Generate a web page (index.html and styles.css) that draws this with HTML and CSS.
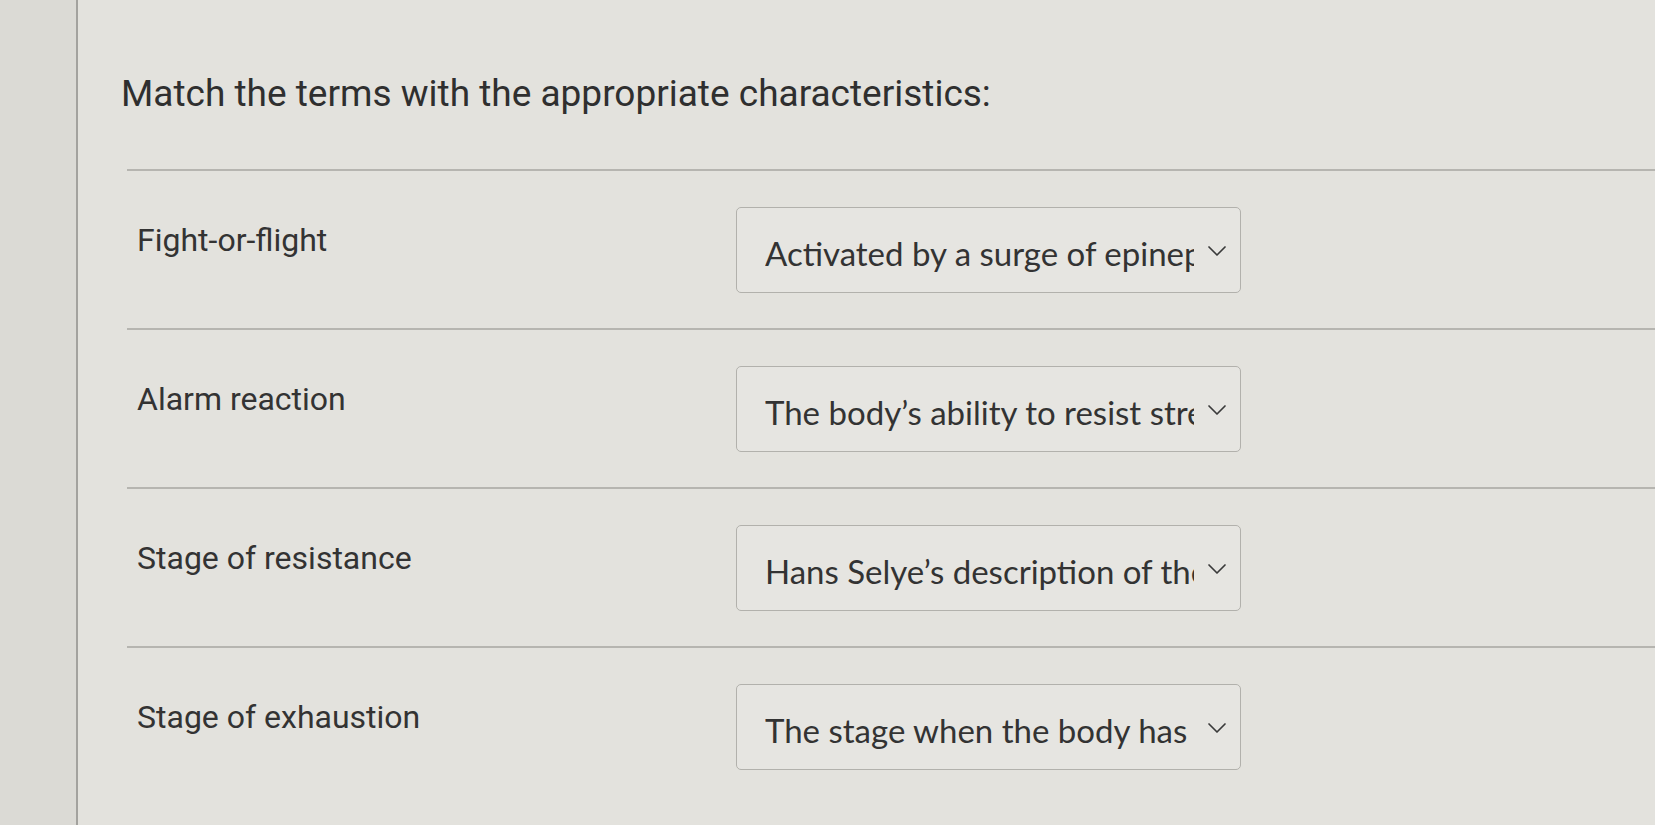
FILE: index.html
```html
<!DOCTYPE html>
<html lang="en">
<head>
<meta charset="utf-8">
<title>Matching question</title>
<link rel="stylesheet" href="styles.css">
</head>
<body>
<div class="page">
  <div class="gutter"></div>
  <main class="main">
    <h1 class="title">Match the terms with the appropriate characteristics:</h1>
    <div class="rows">
      <div class="row">
        <div class="term">Fight-or-flight</div>
        <div class="select"><span class="value">Activated by a surge of epinephrine</span><span class="chev"><svg width="20" height="12" viewBox="0 0 20 12"><path d="M2 2 L10 10 L18 2" fill="none" stroke="#3a3a3a" stroke-width="1.7" stroke-linecap="round" stroke-linejoin="round"/></svg></span></div>
      </div>
      <div class="row">
        <div class="term">Alarm reaction</div>
        <div class="select"><span class="value">The body’s ability to resist stress</span><span class="chev"><svg width="20" height="12" viewBox="0 0 20 12"><path d="M2 2 L10 10 L18 2" fill="none" stroke="#3a3a3a" stroke-width="1.7" stroke-linecap="round" stroke-linejoin="round"/></svg></span></div>
      </div>
      <div class="row">
        <div class="term">Stage of resistance</div>
        <div class="select"><span class="value">Hans Selye’s description of the body’s response</span><span class="chev"><svg width="20" height="12" viewBox="0 0 20 12"><path d="M2 2 L10 10 L18 2" fill="none" stroke="#3a3a3a" stroke-width="1.7" stroke-linecap="round" stroke-linejoin="round"/></svg></span></div>
      </div>
      <div class="row">
        <div class="term">Stage of exhaustion</div>
        <div class="select"><span class="value">The stage when the body has</span><span class="chev"><svg width="20" height="12" viewBox="0 0 20 12"><path d="M2 2 L10 10 L18 2" fill="none" stroke="#3a3a3a" stroke-width="1.7" stroke-linecap="round" stroke-linejoin="round"/></svg></span></div>
      </div>
    </div>
  </main>
</div>
</body>
</html>
```
FILE: styles.css
```css
html, body {
  margin: 0;
  padding: 0;
}
body {
  background: #e3e2dd;
  font-family: Roboto, "Liberation Sans", sans-serif;
  color: #333333;
}
.page {
  display: flex;
  min-height: 825px;
}
.gutter {
  width: 76px;
  flex: none;
  background: #dbdad5;
  border-right: 2px solid #a3a29e;
}
.main {
  flex: 1;
  padding-left: 43px;
}
.title {
  margin: 0 0 52px 0;
  padding-top: 71px;
  font-weight: 400;
  font-size: 37px;
  line-height: 46px;
  color: #2f2f2f;
}
.rows {
  margin-left: 6px;
}
.row {
  display: grid;
  grid-template-columns: 599px 505px;
  border-top: 2px solid #b6b5b0;
  padding: 36px 0 35px 10px;
}
.term {
  margin-top: 14px;
  font-size: 32px;
  line-height: 38px;
  color: #333333;
}
.select {
  box-sizing: border-box;
  height: 86px;
  display: flex;
  align-items: center;
  border: 1.5px solid #b2b1ac;
  border-radius: 5px;
  padding-left: 28px;
  background: #e6e5e1;
}
.value {
  flex: 1;
  min-width: 0;
  overflow: hidden;
  white-space: nowrap;
  font-family: Lato, "Open Sans", sans-serif;
  font-size: 33px;
  line-height: 40px;
  color: #333333;
  padding-top: 6px;
}
.chev {
  width: 46px;
  flex: none;
  display: flex;
  justify-content: center;
  padding-top: 2px;
}
```
